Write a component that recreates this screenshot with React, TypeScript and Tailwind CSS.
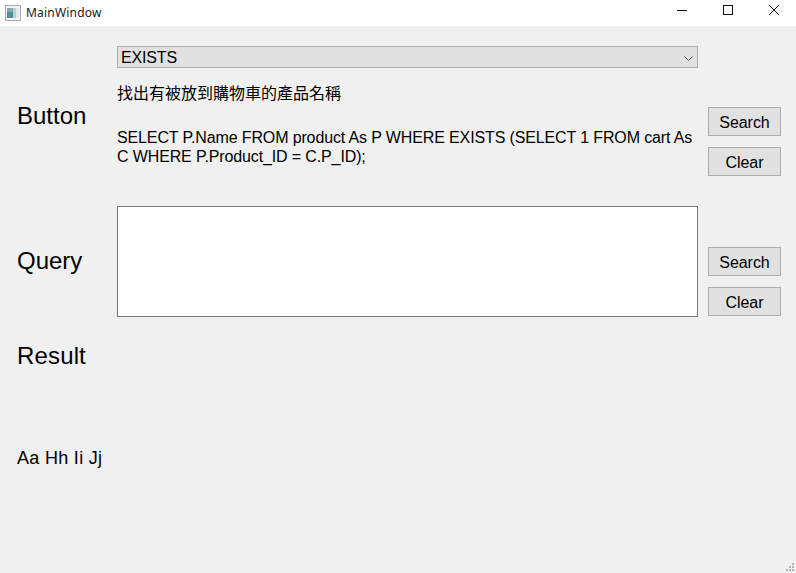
export default function App() {
  const font = "font-['Liberation_Sans','Noto_Sans_CJK_TC',sans-serif]";
  const btn =
    "h-[29px] w-[73px] border border-[#adadad] bg-[#e1e1e1] pt-[2px] text-[16px] leading-none tracking-[-0.05px] text-black";
  const label = "text-[24px] leading-[28px] text-black";
  return (
    <div className={`${font} relative flex h-[573px] w-[796px] flex-col overflow-hidden bg-[#f0f0f0] text-black`}>
      <header className="flex h-[26px] items-center bg-white">
        <svg width="16" height="16" viewBox="0 0 16 16" className="ml-[5px]">
          <rect x="0.5" y="0.5" width="15" height="15" fill="#f4f4f4" stroke="#a8a8a8" />
          <rect x="2" y="3" width="6" height="10" fill="#4f8f8f" />
          <rect x="2" y="3" width="6" height="4" fill="#7fa7b7" />
          <rect x="8" y="3" width="3" height="10" fill="#b9cfd8" />
          <rect x="11" y="3" width="3" height="10" fill="#e4e9ec" />
        </svg>
        <span className="ml-[5px] text-[12px] tracking-[0.2px] text-[#1a1a1a]" style={{ fontFamily: "'Noto Sans', sans-serif" }}>
          MainWindow
        </span>
        <div className="ml-auto flex h-full items-center">
          <svg width="46" height="26" viewBox="0 0 46 26">
            <path d="M19 10.5h10" stroke="#111" strokeWidth="1" />
          </svg>
          <svg width="46" height="26" viewBox="0 0 46 26">
            <rect x="19.5" y="5.5" width="9" height="9" fill="none" stroke="#111" />
          </svg>
          <svg width="46" height="26" viewBox="0 0 46 26">
            <path d="M19 5l10 10M29 5L19 15" stroke="#111" strokeWidth="1" fill="none" />
          </svg>
        </div>
      </header>

      <main className="flex flex-1 flex-col">
        <section className="flex h-[180px]">
          <div className="flex w-[117px] items-center pl-[17px]">
            <span className={label}>Button</span>
          </div>
          <div className="flex w-[581px] flex-col pt-[20px]">
            <div className="relative flex h-[22px] items-center border border-[#adadad] bg-[#e1e1e1] pl-[3px] pt-[2px] text-[16px] leading-none tracking-[-0.15px]">
              EXISTS
              <svg width="9" height="6" viewBox="0 0 9 6" className="absolute right-[4px] top-[9px]">
                <path d="M0.5 0.5L4.5 4.5L8.5 0.5" fill="none" stroke="#555" strokeWidth="1" />
              </svg>
            </div>
            <p className="mt-[16px] text-[16px] leading-[20px]">找出有被放到購物車的產品名稱</p>
            <p className="mt-[24px] text-[16px] leading-[19px] tracking-[-0.13px]">
              SELECT P.Name FROM product As P WHERE EXISTS (SELECT 1 FROM cart As C WHERE P.Product_ID = C.P_ID);
            </p>
          </div>
          <div className="flex flex-col gap-[11px] pl-[10px] pt-[81px]">
            <button className={btn}>Search</button>
            <button className={btn}>Clear</button>
          </div>
        </section>

        <section className="flex h-[111px]">
          <div className="flex w-[117px] items-center pb-[2px] pl-[17px]">
            <span className={label}>Query</span>
          </div>
          <div className="h-[111px] w-[581px] border border-[#7a7a7a] bg-white" />
          <div className="flex flex-col gap-[11px] pl-[10px] pt-[41px]">
            <button className={btn}>Search</button>
            <button className={btn}>Clear</button>
          </div>
        </section>

        <div className={`${label} ml-[17px] mt-[25px] tracking-[0.15px]`}>Result</div>
        <div className="ml-[17px] mt-[78px] text-[18px] leading-[21px] tracking-[0.3px]">Aa Hh Ii Jj</div>
      </main>

      <svg width="12" height="12" viewBox="0 0 12 12" className="absolute bottom-0 right-0">
        <g fill="#b4b4b4">
          <rect x="8" y="2" width="2" height="2" />
          <rect x="5" y="5" width="2" height="2" />
          <rect x="8" y="5" width="2" height="2" />
          <rect x="2" y="8" width="2" height="2" />
          <rect x="5" y="8" width="2" height="2" />
          <rect x="8" y="8" width="2" height="2" />
        </g>
      </svg>
    </div>
  );
}
